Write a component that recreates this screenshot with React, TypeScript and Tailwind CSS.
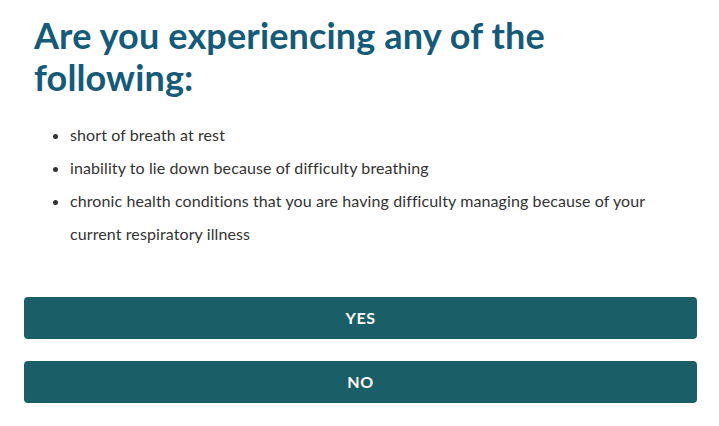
export default function App() {
  const items = [
    "short of breath at rest",
    "inability to lie down because of difficulty breathing",
    "chronic health conditions that you are having difficulty managing because of your current respiratory illness",
  ];
  return (
    <div className="w-[719px] h-[426px] bg-white overflow-hidden" style={{ fontFamily: "Lato, 'Open Sans', sans-serif" }}>
      <div className="pl-[24px] pr-[22px] pt-[14px]">
        <h1 className="pl-[10px] pr-[100px] text-[36px] leading-[42px] font-bold tracking-[0.15px] text-[#135b79]">
          Are you experiencing any of the following:
        </h1>
        <ul className="mt-[20px] pl-[46px] pr-[20px] list-disc text-[16px] leading-[33px] tracking-[0.1px] text-[#333333] marker:text-[#333333]">
          {items.map((t) => (
            <li key={t}>{t}</li>
          ))}
        </ul>
        <div className="mt-[47px] flex flex-col gap-[22px]">
          <button className="h-[42px] w-full rounded-[4px] bg-[#1a5f67] text-white font-bold text-[16px] tracking-[0.5px]">
            YES
          </button>
          <button className="h-[42px] w-full rounded-[4px] bg-[#1a5f67] text-white font-bold text-[16px] tracking-[0.5px]">
            NO
          </button>
        </div>
      </div>
    </div>
  );
}
